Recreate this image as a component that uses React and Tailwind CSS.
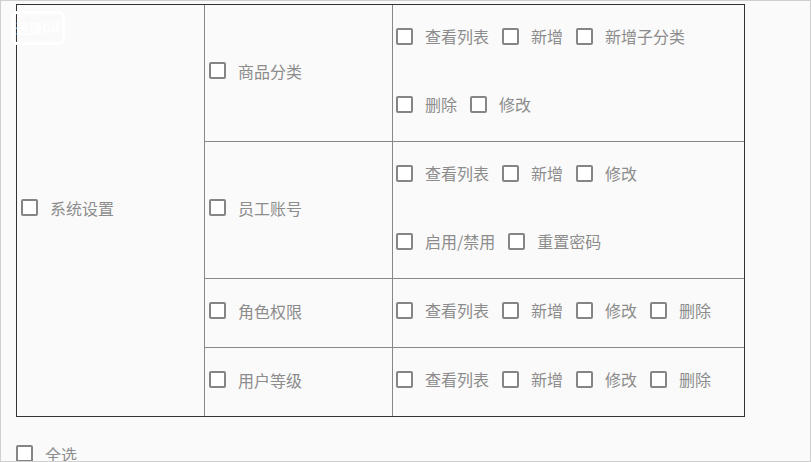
import React from "react";

const font = { fontFamily: '"Noto Sans CJK SC", "Noto Sans", sans-serif' };

const perms = [
  {
    name: "商品分类",
    lines: [["查看列表", "新增", "新增子分类"], ["删除", "修改"]],
  },
  {
    name: "员工账号",
    lines: [["查看列表", "新增", "修改"], ["启用/禁用", "重置密码"]],
  },
  { name: "角色权限", lines: [["查看列表", "新增", "修改", "删除"]] },
  { name: "用户等级", lines: [["查看列表", "新增", "修改", "删除"]] },
];

const Check = ({ label }) => (
  <label className="flex items-center gap-[12px] text-[16px] text-[#8c8c8c] leading-none">
    <span className="w-[17px] h-[17px] border-2 border-[#858585] rounded-[2px] bg-white shrink-0" />
    {label}
  </label>
);

const App = () => {
  return (
    <div className="w-[811px] h-[462px] overflow-hidden bg-[#fafafa] border border-[#cfcfcf] relative" style={font}>
      <div className="absolute left-[10px] top-[10px] w-[54px] h-[34px] rounded-[6px] border-[3px] border-white flex items-center justify-center text-white text-[13px] font-bold">
        迅捷Gif
      </div>
      <div className="pl-[15px] pt-[3px]">
        <div className="flex w-[729px] border border-[#333]">
          <div className="w-[187px] flex items-center pl-[4px] pb-[6px]">
            <Check label="系统设置" />
          </div>
          <div className="flex-1 flex flex-col border-l border-[#888]">
            {perms.map((p, i) => (
              <div key={p.name} className={"flex " + (i > 0 ? "border-t border-[#888]" : "")}>
                <div className="w-[188px] flex items-center pl-[4px] pb-[5px] border-r border-[#888]">
                  <Check label={p.name} />
                </div>
                <div className="flex-1 flex flex-col gap-[6px] pb-[6px] pl-[3px]">
                  {p.lines.map((line, j) => (
                    <div key={j} className="h-[62px] flex items-center gap-[13px]">
                      {line.map((l) => (
                        <Check key={l} label={l} />
                      ))}
                    </div>
                  ))}
                </div>
              </div>
            ))}
          </div>
        </div>
        <div className="mt-[28px]">
          <Check label="全选" />
        </div>
      </div>
    </div>
  );
};

export default App;
